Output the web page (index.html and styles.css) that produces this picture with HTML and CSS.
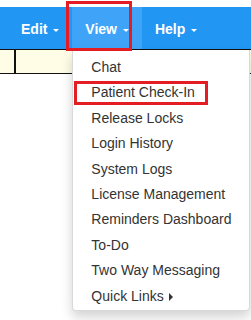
FILE: index.html
```html
<!DOCTYPE html>
<html lang="en">

<head>
  <meta charset="UTF-8">
  <meta name="viewport" content="width=device-width, initial-scale=1.0">
  <title>View Menu</title>
  <link rel="stylesheet" href="styles.css">
</head>

<body>
  <!-- Top navigation -->
  <nav class="navbar">
    <ul class="nav">
      <li class="nav-item"><a href="#">Edit <span class="caret"></span></a></li>
      <li class="nav-item open">
        <a href="#">View <span class="caret"></span></a>
        <ul class="dropdown-menu">
          <li><a href="#">Chat</a></li>
          <li><a href="#">Patient Check-In</a></li>
          <li><a href="#">Release Locks</a></li>
          <li><a href="#">Login History</a></li>
          <li><a href="#">System Logs</a></li>
          <li><a href="#">License Management</a></li>
          <li><a href="#">Reminders Dashboard</a></li>
          <li><a href="#">To-Do</a></li>
          <li><a href="#">Two Way Messaging</a></li>
          <li><a href="#">Quick Links<span class="arrow-right"></span></a></li>
        </ul>
      </li>
      <li class="nav-item"><a href="#">Help <span class="caret"></span></a></li>
    </ul>
  </nav>

  <!-- Grid row behind the menu -->
  <div class="grid-row">
    <div class="grid-cell first"></div>
    <div class="grid-cell"></div>
  </div>

  <!-- Highlight marks -->
  <div class="mark mark-view"></div>
  <div class="mark mark-checkin"></div>
</body>

</html>
```

FILE: styles.css
```css
/* Reset and base styles */
body,
ul,
li {
  margin: 0;
  padding: 0;
  list-style: none;
}

body {
  font-family: 'Liberation Sans', Arial, sans-serif;
  font-size: 14px;
  background: #fff;
  padding-top: 7px;
  position: relative;
  min-height: 320px;
  box-sizing: border-box;
}

/* Navbar */
.navbar {
  background: #2196f3;
  height: 42px;
}

.nav {
  display: flex;
  margin-left: 8px;
  height: 100%;
}

.nav-item {
  position: relative;
}

.nav-item > a {
  display: block;
  padding: 12px 13px 10px;
  line-height: 20px;
  color: #fff;
  font-weight: bold;
  text-decoration: none;
}

.nav-item.open {
  background: #3fa4f7;
}

.caret {
  display: inline-block;
  width: 0;
  height: 0;
  margin-left: 2px;
  vertical-align: middle;
  border-top: 3px solid #fff;
  border-left: 3px solid transparent;
  border-right: 3px solid transparent;
}

/* Dropdown */
.dropdown-menu {
  position: absolute;
  top: 100%;
  left: 0;
  margin-top: 1px;
  width: 178px;
  box-sizing: border-box;
  padding: 5px 0 1px;
  background: #fff;
  border: 1px solid rgba(0, 0, 0, 0.15);
  border-top: none;
  border-radius: 0 0 4px 4px;
  box-shadow: 0 6px 12px rgba(0, 0, 0, 0.175);
  z-index: 10;
}

.dropdown-menu li a {
  display: block;
  padding: 3px 18px;
  line-height: 19.4px;
  color: #333;
  text-decoration: none;
  white-space: nowrap;
}

.arrow-right {
  display: inline-block;
  width: 0;
  height: 0;
  margin-left: 5px;
  vertical-align: 0;
  border-left: 4px solid #333;
  border-top: 4px solid transparent;
  border-bottom: 4px solid transparent;
}

/* Grid row */
.grid-row {
  display: flex;
  height: 23px;
  background: #fffde6;
  border-top: 1px solid #111;
  border-bottom: 1px solid #111;
}

.grid-cell.first {
  width: 14px;
  border-right: 2px solid #111;
}

/* Highlight marks */
.mark {
  position: absolute;
  border: 3px solid #e41d24;
  box-sizing: border-box;
  z-index: 20;
}

.mark-view {
  left: 66px;
  top: 1px;
  width: 66px;
  height: 50px;
}

.mark-checkin {
  left: 74px;
  top: 81px;
  width: 134px;
  height: 24px;
}
```
